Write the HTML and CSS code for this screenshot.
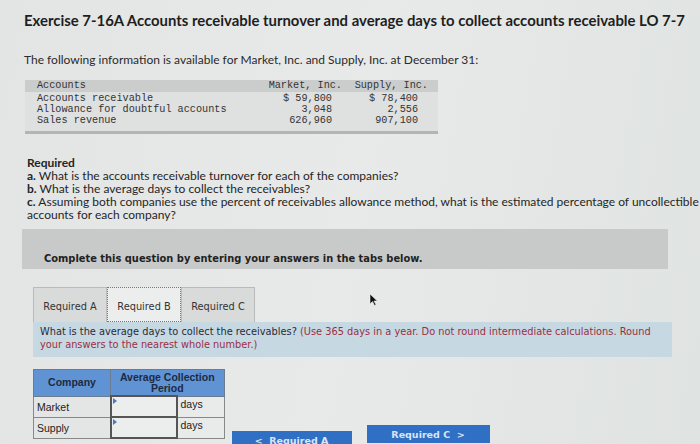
FILE: index.html
```html
<!DOCTYPE html>
<html>
<head>
<meta charset="utf-8">
<link rel="stylesheet" href="styles.css">
</head>
<body>
<div class="page">
  <h1 class="title">Exercise 7-16A Accounts receivable turnover and average days to collect accounts receivable LO 7-7</h1>
  <p class="intro">The following information is available for Market, Inc. and Supply, Inc. at December 31:</p>

  <div class="data">
    <div class="drow dhead"><span>Accounts</span><span class="num">Market, Inc.</span><span class="num">Supply, Inc.</span></div>
    <div class="drow"><span>Accounts receivable</span><span class="num v">$ 59,800</span><span class="num v">$ 78,400</span></div>
    <div class="drow"><span>Allowance for doubtful accounts</span><span class="num v">3,048</span><span class="num v">2,556</span></div>
    <div class="drow"><span>Sales revenue</span><span class="num v">626,960</span><span class="num v">907,100</span></div>
  </div>

  <div class="required">
    <div class="req-h">Required</div>
    <div><b>a.</b> What is the accounts receivable turnover for each of the companies?</div>
    <div><b>b.</b> What is the average days to collect the receivables?</div>
    <div><b>c.</b> Assuming both companies use the percent of receivables allowance method, what is the estimated percentage of uncollectible accounts for each company?</div>
  </div>

  <div class="banner">Complete this question by entering your answers in the tabs below.</div>

  <div class="tabs">
    <div class="tab">Required A</div>
    <div class="tab active">Required B</div>
    <div class="tab">Required C</div>
  </div>

  <div class="prompt">What is the average days to collect the receivables? <span class="red">(Use 365 days in a year. Do not round intermediate calculations. Round your answers to the nearest whole number.)</span></div>

  <div class="bottom">
    <table class="answers">
      <tr><th class="c1">Company</th><th colspan="2">Average Collection<br>Period</th></tr>
      <tr><td class="c1">Market</td><td class="inp"><span class="mark"></span></td><td class="unit">days</td></tr>
      <tr><td class="c1">Supply</td><td class="inp"><span class="mark"></span></td><td class="unit">days</td></tr>
    </table>
    <div class="nav">
      <div class="btn prev">&lt; &nbsp;Required A</div>
      <div class="btn next">Required C &nbsp;&gt;</div>
    </div>
  </div>

  <svg class="cursor" width="9" height="13" viewBox="0 0 9 13"><path d="M1 1 L1 11 L3.5 8.5 L5.5 12.5 L7 11.8 L5 8 L8.3 8 Z" fill="#111" stroke="#eee" stroke-width="0.6"/></svg>
</div>
</body>
</html>
```

FILE: styles.css
```css
html, body { margin: 0; padding: 0; }
body {
  width: 700px; height: 444px; overflow: hidden;
  background: linear-gradient(100deg, #e3e5e4 0%, #e8eae9 50%, #dfe3e1 100%);
  font-family: "Lato", "Liberation Sans", sans-serif;
  color: #222;
}
.page { position: relative; padding: 11px 0 0 24px; }
.title {
  margin: 0; font-size: 14.9px; font-weight: 700; white-space: nowrap;
  line-height: 18px; color: #1e1e1e;
}
.intro { margin: 24px 0 0 0; font-size: 12px; line-height: 14px; color: #2a2a2a; }
.data {
  width: 413px; margin: 13px 0 0 1px;
  background: #dfe0e0; border-bottom: 3px solid #b3b5b5;
  font-family: "Liberation Mono", monospace; font-size: 10.2px; line-height: 11px;
  color: #333; padding-bottom: 5px;
}
.drow { display: grid; grid-template-columns: 12px 211px 94px 86px; }
.drow::before { content: ""; }
.dhead { background: #cbcdcd; line-height: 12px; margin-bottom: 1px; }
.num { text-align: right; }
.v { padding-right: 10px; }
.required { margin: 22px 0 0 3px; font-size: 12px; line-height: 13px; width: 680px; color: #252525; }
.req-h { font-weight: 700; }
.banner {
  margin: 8px 0 0 -2px; width: 646px; height: 40px;
  background: #c8cac9; box-sizing: border-box; padding: 24px 0 0 22px;
  font-family: "DejaVu Sans", sans-serif; font-weight: 700; font-size: 9.9px; line-height: 12px; color: #222;
}
.tabs { display: flex; margin: 18px 0 0 9px; }
.tab {
  width: 74px; height: 35px; box-sizing: border-box; padding-top: 3px;
  background: #d9dbda; border: 1px solid #b9bbbb; border-bottom: none;
  font-family: "DejaVu Sans", sans-serif; font-size: 9.8px; color: #333;
  display: flex; align-items: center; justify-content: center;
}
.tab.active { background: #eceeed; border: 1px dotted #777; }
.prompt {
  margin: 0 0 0 9px; width: 639px; box-sizing: border-box; height: 35px;
  background: #c6d8e2; padding: 3px 8px 0 7px;
  font-family: "DejaVu Sans", sans-serif; font-size: 9.8px; line-height: 13px; color: #2a2a38;
}
.red { color: #9a2f45; }
.bottom { display: flex; align-items: flex-start; margin: 12px 0 0 9px; }
.answers {
  border-collapse: collapse;
  font-family: "Liberation Sans", sans-serif; font-size: 10.5px; color: #222;
}
.answers th {
  background: #5f93d3; color: #1c2a44; font-weight: 700; border: 1px solid #6b7c90;
  height: 25px; line-height: 11px; padding: 0; text-align: center;
}
.answers th.c1 { width: 76px; }
.answers td { border: 1px solid #888; height: 19px; padding: 0 3px; background: #e9ebea; }
.answers td.c1 { background: #e4e6e5; }
.answers td.inp { width: 58px; border: 2px solid #555; background: #eceeed; position: relative; }
.mark { position: absolute; left: 1px; top: 1px; width: 0; height: 0; border-left: 4px solid #4a7bc0; border-top: 3px solid transparent; border-bottom: 3px solid transparent; }
.answers td.unit { width: 40px; vertical-align: top; padding-top: 1px; }
.nav { display: flex; gap: 15px; margin-left: 7px; align-items: flex-start; }
.btn {
  height: 18px; background: #2f6fc4; color: #dbe6f5; font-family: "DejaVu Sans", sans-serif;
  font-size: 9.5px; font-weight: 700; display: flex; align-items: center; justify-content: center;
}
.prev { width: 120px; margin-top: 62px; }
.next { width: 123px; margin-top: 56px; }
.cursor { position: absolute; left: 369px; top: 293px; }
```
